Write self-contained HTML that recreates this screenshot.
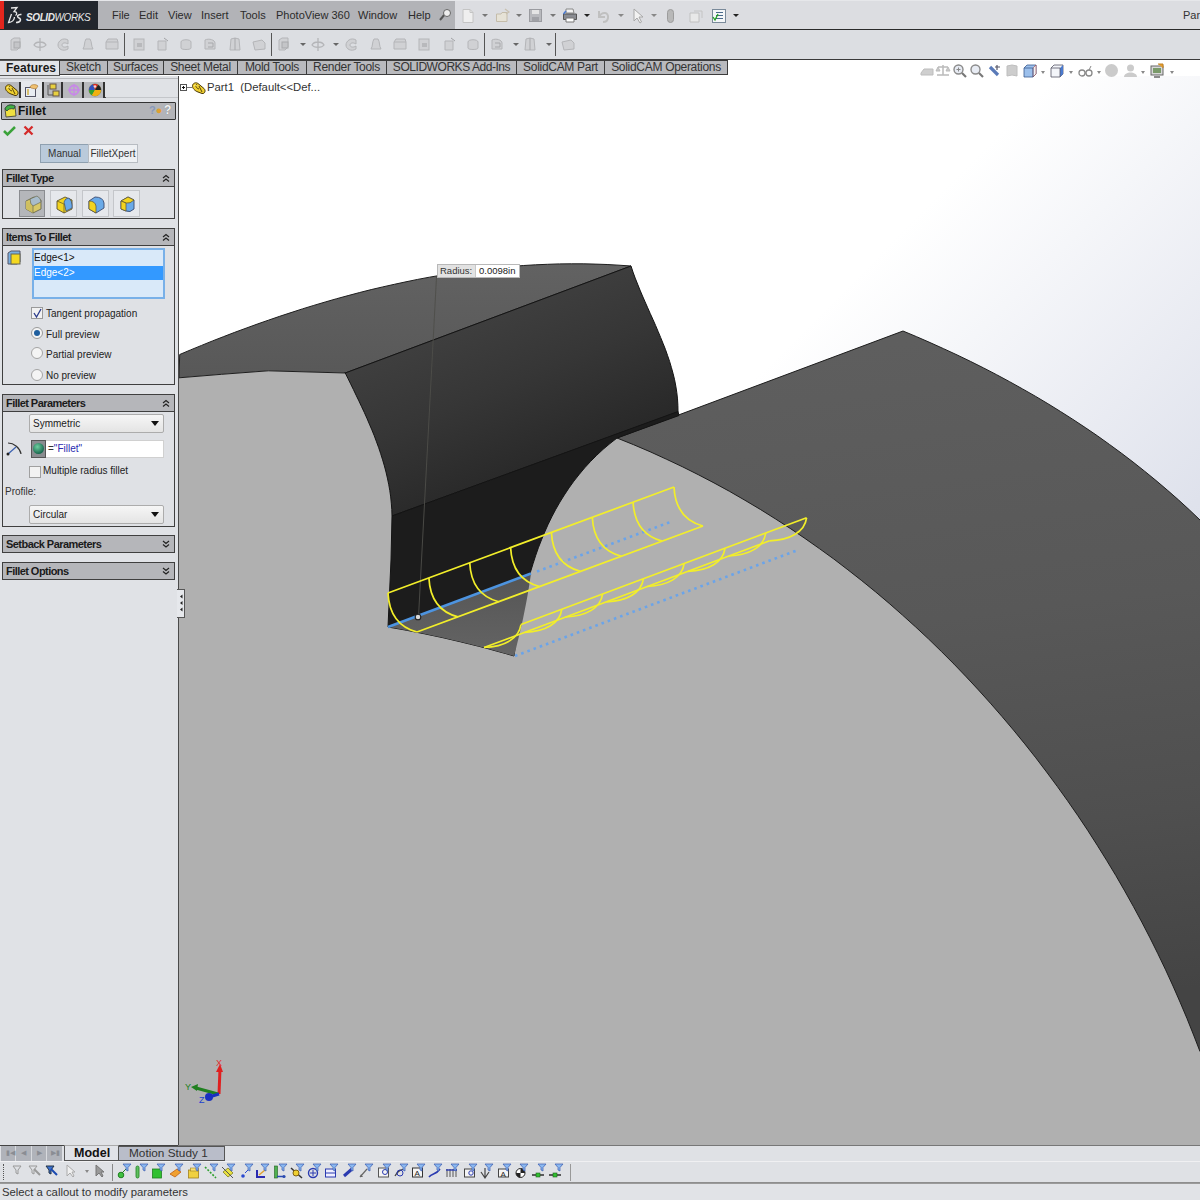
<!DOCTYPE html>
<html><head><meta charset="utf-8">
<style>
*{margin:0;padding:0;box-sizing:border-box}
html,body{width:1200px;height:1200px;overflow:hidden;background:#dfe1e5;font-family:"Liberation Sans",sans-serif;color:#222}
.a{position:absolute}
#title{left:0;top:0;width:1200px;height:30px;background:#dcdde1}
#menu{left:98px;top:1px;width:357px;height:28px;background:#b2b3b7}
#logo{left:0;top:0;width:98px;height:29px;background:#22262d}
#red{left:0;top:0;width:4px;height:29px;background:#e3261d}
#tline{left:0;top:29px;width:1200px;height:1px;background:#2a2a2a}
.mi{position:absolute;top:9px;font-size:11px;color:#2b2b2b;white-space:nowrap}
#tb2{left:0;top:30px;width:1200px;height:30px;background:#dcdee2}
#tline2{left:0;top:59px;width:1200px;height:1px;background:#3a3a3a}
#tabs{left:0;top:60px;width:1200px;height:16px;background:#fff}
.tab{position:absolute;top:0;height:15px;background:#b9babe;border:1px solid #3c3c3c;border-left:none;font-size:12px;line-height:13px;color:#333;white-space:nowrap;text-align:center;letter-spacing:-0.3px}
#left{left:0;top:76px;width:179px;height:1069px;background:#e0e2e6;border-right:1px solid #4a4a4a}
#vp{left:179px;top:76px;width:1021px;height:1070px;overflow:hidden;background:linear-gradient(135deg,#ffffff 0%,#ffffff 42%,#dfe2ec 69%,#c8ccdb 100%)}
#btabs{left:0;top:1145px;width:1200px;height:17px;background:#dfe1e5;border-top:1px solid #777}
#btool{left:0;top:1162px;width:1200px;height:21px;background:#dfe1e5}
#status{left:0;top:1183px;width:1200px;height:17px;background:#e1e3e7;border-top:1px solid #9a9a9a}
.hdr{position:absolute;left:2px;width:173px;height:18px;background:#b5b6ba;border:1px solid #3f3f3f;font-size:11px;font-weight:bold;line-height:16px;padding-left:3px;color:#1a1a1a;letter-spacing:-0.55px}
.body{position:absolute;left:2px;width:173px;background:#dfe1e5;border:1px solid #3f3f3f;border-top:none}
.txt{position:absolute;font-size:10px;color:#222;white-space:nowrap}
</style></head><body>
<div id="title" class="a"></div>
<div id="menu" class="a">
</div>
<div id="logo" class="a"></div>
<div id="red" class="a"></div>
<div id="tline" class="a"></div>
<div id="tb2" class="a"></div>
<div id="tline2" class="a"></div>
<div id="tabs" class="a"></div>
<div class="a" style="left:0;top:0;width:1200px;height:1px;background:#e6e7ea"></div>
<svg class="a" style="left:5px;top:5px" width="20" height="20" viewBox="0 0 20 20"><path d="M6 3 L12 2.5 L9 6.5 C12 6.5 12.5 9 10.5 10.5" fill="none" stroke="#e6e6e6" stroke-width="1.3"/><path d="M6.5 9 L3.5 17.5 C7 17.5 9.5 15 9.5 12" fill="none" stroke="#e6e6e6" stroke-width="1.3"/><path d="M16.5 9.5 C12.5 9 11.5 12 14 13 C16.5 14 16 17.5 11 17.5" fill="none" stroke="#e6e6e6" stroke-width="1.5"/></svg><div class="a" style="left:26px;top:12px;font-size:10px;line-height:11px;font-style:italic;color:#e8e8e8;letter-spacing:-0.4px;white-space:nowrap"><b>SOLID</b>WORKS</div>
<div class="mi" style="left:112px">File</div>
<div class="mi" style="left:139px">Edit</div>
<div class="mi" style="left:168px">View</div>
<div class="mi" style="left:201px">Insert</div>
<div class="mi" style="left:240px">Tools</div>
<div class="mi" style="left:276px">PhotoView 360</div>
<div class="mi" style="left:358px">Window</div>
<div class="mi" style="left:408px">Help</div>
<svg class="a" style="left:438px;top:8px" width="14" height="14" viewBox="0 0 14 14"><path d="M2 12 L7 6" stroke="#555" stroke-width="2"/><circle cx="9" cy="5" r="3.5" fill="#eee" stroke="#666"/></svg>
<div class="mi" style="left:1183px;color:#333">Par</div>
<svg class="a" style="left:461px;top:8px" width="14" height="16"><path d="M2 1.5 H9 L12 4.5 V14.5 H2Z" fill="#efefef" stroke="#c4c4c4"/><path d="M9 1.5 V4.5 H12" fill="none" stroke="#c4c4c4"/></svg><div class="a" style="left:482px;top:14px;width:0;height:0;border-left:3px solid transparent;border-right:3px solid transparent;border-top:3px solid #777"></div><svg class="a" style="left:495px;top:8px" width="16" height="16"><path d="M1.5 6 H6 L7 4.5 H12 V13.5 H1.5Z" fill="#e6e2d6" stroke="#c4bcaa"/><path d="M10 1 L14 4 L11 6" fill="none" stroke="#c8c0b0" stroke-width="1.2"/></svg><div class="a" style="left:516px;top:14px;width:0;height:0;border-left:3px solid transparent;border-right:3px solid transparent;border-top:3px solid #777"></div><svg class="a" style="left:528px;top:8px" width="15" height="15"><rect x="1.5" y="1.5" width="12" height="12" fill="#b8b9bd" stroke="#9a9ba0"/><rect x="4" y="2" width="7" height="4" fill="#e4e4e4"/><rect x="4" y="9" width="7" height="4" fill="#a0a1a6"/></svg><div class="a" style="left:550px;top:14px;width:0;height:0;border-left:3px solid transparent;border-right:3px solid transparent;border-top:3px solid #777"></div><svg class="a" style="left:562px;top:7px" width="16" height="17"><path d="M4 2 H11 L12 6 H4Z" fill="#f4f4f4" stroke="#888"/><path d="M1.5 7 H14.5 V12.5 H1.5Z" fill="#8a8c92" stroke="#555"/><path d="M4 11 H12 V15 H4Z" fill="#fff" stroke="#777"/><path d="M1.5 7 L4 4" stroke="#4a7ad0" stroke-width="1.5"/></svg><div class="a" style="left:584px;top:14px;width:0;height:0;border-left:3px solid transparent;border-right:3px solid transparent;border-top:3px solid #222"></div><svg class="a" style="left:596px;top:8px" width="16" height="16"><path d="M3 3 V9 H9" fill="none" stroke="#c0c0c0" stroke-width="2"/><path d="M3 9 C6 3 13 4 12 10 C11.5 13 9 14 7 14" fill="none" stroke="#c0c0c0" stroke-width="2"/></svg><div class="a" style="left:618px;top:14px;width:0;height:0;border-left:3px solid transparent;border-right:3px solid transparent;border-top:3px solid #888"></div><svg class="a" style="left:632px;top:8px" width="12" height="16"><path d="M2 1 L2 13 L5 10 L8 15 L9.5 14 L7 9 L11 9 Z" fill="#f2f2f2" stroke="#a8a8a8"/></svg><div class="a" style="left:651px;top:14px;width:0;height:0;border-left:3px solid transparent;border-right:3px solid transparent;border-top:3px solid #888"></div><div class="a" style="left:667px;top:9px;width:7px;height:14px;background:#b8b8b8;border-radius:3.5px;border:1px solid #9c9c9c"></div><svg class="a" style="left:688px;top:8px" width="16" height="16"><path d="M2 5 H11 V14 H2Z" fill="#e8e8e8" stroke="#c0c0c0"/><path d="M6 3 H14 V10" fill="none" stroke="#c4c4c4"/></svg><svg class="a" style="left:711px;top:8px" width="16" height="16"><rect x="1.5" y="1.5" width="13" height="13" fill="#f4f6f8" stroke="#7a8a9a"/><path d="M5 4.5 H12 M5 7.5 H12 M5 10.5 H12" stroke="#4a6a8a"/><path d="M2 9 L4 12 L7 6" fill="none" stroke="#20a020" stroke-width="1.3"/></svg><div class="a" style="left:733px;top:14px;width:0;height:0;border-left:3px solid transparent;border-right:3px solid transparent;border-top:3px solid #222"></div><svg class="a" style="left:9px;top:37px" width="15" height="15"><path d="M2 3 L5 1 L11 1 L11 10 L8 13 L2 13Z" fill="#d0d1d4" stroke="#b4b5b8"/><rect x="5" y="5" width="6" height="6" fill="#c4c5c8" stroke="#a8a9ac"/></svg><svg class="a" style="left:33px;top:37px" width="15" height="15"><path d="M7 1 V14 M1 8 C3 4 11 4 13 8 C11 11 3 11 1 8Z" fill="none" stroke="#b4b5b8" stroke-width="1.3"/></svg><svg class="a" style="left:57px;top:37px" width="15" height="15"><path d="M11 3 C6 0 1 4 1 8 C1 12 6 15 11 12 L11 9 C8 11 5 10 5 8 C5 6 8 5 11 7Z" fill="#d0d1d4" stroke="#b4b5b8"/></svg><svg class="a" style="left:81px;top:37px" width="15" height="15"><path d="M5 2 C3 5 4 9 2 12 H12 C10 9 11 5 9 2Z" fill="#d0d1d4" stroke="#b4b5b8"/></svg><svg class="a" style="left:105px;top:37px" width="15" height="15"><path d="M1 5 L3 2 L12 2 L13 5 V12 H1Z" fill="#d0d1d4" stroke="#b4b5b8"/><path d="M1 5 H13" stroke="#b4b5b8"/></svg><svg class="a" style="left:132px;top:37px" width="15" height="15"><rect x="2" y="2" width="10" height="11" fill="#d0d1d4" stroke="#b4b5b8"/><rect x="5" y="6" width="5" height="4" fill="#b8b9bc"/></svg><svg class="a" style="left:155px;top:37px" width="15" height="15"><path d="M3 4 H11 V13 H3Z" fill="#d0d1d4" stroke="#b4b5b8"/><path d="M9 1 L13 4" stroke="#a0a1a4"/></svg><svg class="a" style="left:179px;top:37px" width="15" height="15"><path d="M2 5 C2 2 12 2 12 5 V11 C12 13 2 13 2 11Z" fill="#d0d1d4" stroke="#b4b5b8"/></svg><svg class="a" style="left:203px;top:37px" width="15" height="15"><path d="M2 3 C6 1 12 3 12 6 V12 H2Z" fill="#d0d1d4" stroke="#b4b5b8"/><path d="M5 6 H10 V10 H5" fill="none" stroke="#a8a9ac"/></svg><svg class="a" style="left:228px;top:37px" width="15" height="15"><path d="M3 2 L7 1 L11 2 L12 13 L2 13Z" fill="#d0d1d4" stroke="#b4b5b8"/><path d="M7 1 V13" stroke="#a8a9ac"/></svg><svg class="a" style="left:252px;top:37px" width="15" height="15"><path d="M1 5 L10 3 L13 6 V12 L3 13 Z" fill="#d0d1d4" stroke="#b4b5b8"/></svg><svg class="a" style="left:277px;top:37px" width="15" height="15"><path d="M2 3 L5 1 L11 1 L11 10 L8 13 L2 13Z" fill="#d0d1d4" stroke="#b4b5b8"/><rect x="5" y="5" width="6" height="6" fill="#c4c5c8" stroke="#a8a9ac"/></svg><svg class="a" style="left:311px;top:37px" width="15" height="15"><path d="M7 1 V14 M1 8 C3 4 11 4 13 8 C11 11 3 11 1 8Z" fill="none" stroke="#b4b5b8" stroke-width="1.3"/></svg><svg class="a" style="left:345px;top:37px" width="15" height="15"><path d="M11 3 C6 0 1 4 1 8 C1 12 6 15 11 12 L11 9 C8 11 5 10 5 8 C5 6 8 5 11 7Z" fill="#d0d1d4" stroke="#b4b5b8"/></svg><svg class="a" style="left:369px;top:37px" width="15" height="15"><path d="M5 2 C3 5 4 9 2 12 H12 C10 9 11 5 9 2Z" fill="#d0d1d4" stroke="#b4b5b8"/></svg><svg class="a" style="left:393px;top:37px" width="15" height="15"><path d="M1 5 L3 2 L12 2 L13 5 V12 H1Z" fill="#d0d1d4" stroke="#b4b5b8"/><path d="M1 5 H13" stroke="#b4b5b8"/></svg><svg class="a" style="left:417px;top:37px" width="15" height="15"><rect x="2" y="2" width="10" height="11" fill="#d0d1d4" stroke="#b4b5b8"/><rect x="5" y="6" width="5" height="4" fill="#b8b9bc"/></svg><svg class="a" style="left:442px;top:37px" width="15" height="15"><path d="M3 4 H11 V13 H3Z" fill="#d0d1d4" stroke="#b4b5b8"/><path d="M9 1 L13 4" stroke="#a0a1a4"/></svg><svg class="a" style="left:466px;top:37px" width="15" height="15"><path d="M2 5 C2 2 12 2 12 5 V11 C12 13 2 13 2 11Z" fill="#d0d1d4" stroke="#b4b5b8"/></svg><svg class="a" style="left:490px;top:37px" width="15" height="15"><path d="M2 3 C6 1 12 3 12 6 V12 H2Z" fill="#d0d1d4" stroke="#b4b5b8"/><path d="M5 6 H10 V10 H5" fill="none" stroke="#a8a9ac"/></svg><svg class="a" style="left:523px;top:37px" width="15" height="15"><path d="M3 2 L7 1 L11 2 L12 13 L2 13Z" fill="#d0d1d4" stroke="#b4b5b8"/><path d="M7 1 V13" stroke="#a8a9ac"/></svg><svg class="a" style="left:561px;top:37px" width="15" height="15"><path d="M1 5 L10 3 L13 6 V12 L3 13 Z" fill="#d0d1d4" stroke="#b4b5b8"/></svg><div class="a" style="left:124px;top:33px;width:1px;height:23px;background:#555"></div><div class="a" style="left:271px;top:33px;width:1px;height:23px;background:#555"></div><div class="a" style="left:484px;top:33px;width:1px;height:23px;background:#555"></div><div class="a" style="left:555px;top:33px;width:1px;height:23px;background:#555"></div><div class="a" style="left:300px;top:43px;width:0;height:0;border-left:3px solid transparent;border-right:3px solid transparent;border-top:3px solid #666"></div><div class="a" style="left:333px;top:43px;width:0;height:0;border-left:3px solid transparent;border-right:3px solid transparent;border-top:3px solid #666"></div><div class="a" style="left:513px;top:43px;width:0;height:0;border-left:3px solid transparent;border-right:3px solid transparent;border-top:3px solid #666"></div><div class="a" style="left:546px;top:43px;width:0;height:0;border-left:3px solid transparent;border-right:3px solid transparent;border-top:3px solid #666"></div><div class="a" style="left:0;top:60px;width:59px;height:16px;background:#e2e4e8;border-top:1px solid #555;"></div><div class="a" style="left:6px;top:61px;font-size:12px;font-weight:bold;color:#1a1a1a;line-height:14px">Features</div><div class="tab" style="left:59px;top:60px;width:49px;border-left:1px solid #3c3c3c"><span>Sketch</span></div><div class="tab" style="left:107px;top:60px;width:57px;border-left:1px solid #3c3c3c"><span>Surfaces</span></div><div class="tab" style="left:163px;top:60px;width:75px;border-left:1px solid #3c3c3c"><span>Sheet Metal</span></div><div class="tab" style="left:237px;top:60px;width:70px;border-left:1px solid #3c3c3c"><span>Mold Tools</span></div><div class="tab" style="left:306px;top:60px;width:81px;border-left:1px solid #3c3c3c"><span>Render Tools</span></div><div class="tab" style="left:386px;top:60px;width:131px;border-left:1px solid #3c3c3c"><span style="letter-spacing:-0.45px">SOLIDWORKS Add-Ins</span></div><div class="tab" style="left:516px;top:60px;width:89px;border-left:1px solid #3c3c3c"><span>SolidCAM Part</span></div><div class="tab" style="left:604px;top:60px;width:124px;border-left:1px solid #3c3c3c"><span>SolidCAM Operations</span></div>
<div id="left" class="a"></div>
<div class="a" style="left:0;top:75px;width:60px;height:1px;background:#555"></div><div class="a" style="left:0;top:78px;width:178px;height:1px;background:#b8babe"></div>
<!-- panel tabs -->
<div class="a" style="left:0;top:81px;width:106px;height:17px;border-bottom:1px solid #444"></div><div class="a" style="left:106px;top:97px;width:72px;height:1px;background:#c4c6ca"></div><div class="a" style="left:0;top:82px;width:1px;height:16px;background:#444"></div>
<div class="a" style="left:0;top:82px;width:21px;height:16px;background:#b8b9bd;border-right:2px solid #333"></div>
<div class="a" style="left:21px;top:81px;width:21px;height:17px;background:#e6e8ec"></div>
<div class="a" style="left:42px;top:82px;width:21px;height:16px;background:#b8b9bd;border-left:2px solid #333;border-right:2px solid #333"></div>
<div class="a" style="left:63px;top:82px;width:21px;height:16px;background:#b8b9bd;border-right:2px solid #333"></div>
<div class="a" style="left:84px;top:82px;width:21px;height:16px;background:#b8b9bd;border-right:2px solid #333"></div>
<svg class="a" style="left:3px;top:83px" width="17" height="14"><path d="M2.5 4.5 C3 2 6 1 8 2.5 L14 7.5 C16 9.5 15 13 12 12.5 L8 11 C5 10 2 7 2.5 4.5Z" fill="#f0d030" stroke="#4a3808" stroke-width="1"/><path d="M7 3 C5 5 6 7 9 8 M9 5 L12 11" fill="none" stroke="#4a3808" stroke-width="0.9"/><path d="M4 5 C5 4 6 4 7 5" stroke="#fff6a0" stroke-width="0.8" fill="none"/></svg>
<svg class="a" style="left:24px;top:83px" width="16" height="14"><rect x="1.5" y="4.5" width="10" height="9" fill="#e8ecf2" stroke="#556"/><rect x="3" y="6" width="2" height="6" fill="#d8c070"/><path d="M6 4 C7 1 12 1 14 3 L12 6 L7 5Z" fill="#f0c070" stroke="#a07030" stroke-width="0.6"/></svg>
<svg class="a" style="left:45px;top:83px" width="16" height="14"><rect x="5" y="1" width="6" height="5" fill="#e8d040" stroke="#654"/><rect x="8" y="8" width="6" height="5" fill="#e8d040" stroke="#654"/><path d="M3 2 V12 H8" fill="none" stroke="#555"/></svg>
<svg class="a" style="left:66px;top:83px" width="16" height="14"><circle cx="8" cy="7" r="4.5" fill="none" stroke="#c888e8" stroke-width="1.8"/><path d="M8 1 V13 M2 7 H14" stroke="#c888e8" stroke-width="1.4"/></svg>
<svg class="a" style="left:87px;top:83px" width="16" height="14"><circle cx="8" cy="7" r="6" fill="#f0c020" stroke="#553" stroke-width="0.6"/><path d="M8 7 L6 1.3 A6 6 0 0 1 11 1.8Z" fill="#e02020"/><path d="M8 7 L11 1.8 A6 6 0 0 1 14 7Z" fill="#222"/><path d="M8 7 L2 7 A6 6 0 0 1 6 1.3Z" fill="#3050c0"/><path d="M8 7 L5 12.2 A6 6 0 0 1 2 7Z" fill="#30a030"/><path d="M8 7 L14 7 A6 6 0 0 1 5 12.2Z" fill="#f0b010"/><circle cx="8" cy="3.5" r="1.3" fill="#fff" opacity="0.8"/></svg>
<!-- Fillet header -->
<div class="a" style="left:1px;top:102px;width:175px;height:18px;background:#b3b4b8;border:1px solid #333;border-radius:1px"></div>
<svg class="a" style="left:3px;top:103px" width="15" height="16"><path d="M2 6 C3 2 8 1 12 3 L13 13 L3 14 Z" fill="#f0e040" stroke="#554"/><path d="M2 6 C3 2 8 1 12 3 L11 6 C8 5 5 6 4 8Z" fill="#40b040" stroke="#354"/></svg>
<div class="a" style="left:18px;top:104px;font-size:12px;font-weight:bold;color:#111;line-height:14px">Fillet</div>
<div class="a" style="left:149px;top:104px;font-size:11px;color:#8899bb;font-weight:bold">?<span style="color:#e0a030">&#9679;</span></div>
<div class="a" style="left:164px;top:103px;font-size:12px;color:#f2f2f2;font-weight:bold;text-shadow:0 0 1px #777">?</div>
<!-- check / x -->
<svg class="a" style="left:2px;top:124px" width="15" height="13"><path d="M2 7 L5.5 10.5 L13 3" fill="none" stroke="#3aa23a" stroke-width="2.5"/></svg>
<svg class="a" style="left:22px;top:124px" width="13" height="13"><path d="M2.5 2.5 L10.5 10.5 M10.5 2.5 L2.5 10.5" fill="none" stroke="#d42a2a" stroke-width="2.3"/></svg>
<!-- Manual / FilletXpert -->
<div class="a" style="left:40px;top:144px;width:49px;height:19px;background:#bacadb;border:1px solid #8fa0b0;font-size:10px;color:#333;line-height:17px;text-align:center">Manual</div>
<div class="a" style="left:88px;top:144px;width:50px;height:19px;background:#eef0f3;border:1px solid #b8bcc2;font-size:10px;color:#333;line-height:17px;text-align:center">FilletXpert</div>
<!-- Fillet Type -->
<div class="hdr" style="top:169px">Fillet Type<svg style="position:absolute;right:4px;top:3px" width="8" height="10"><path d="M1 5 L4 2.5 L7 5 M1 8.5 L4 6 L7 8.5" fill="none" stroke="#222" stroke-width="1.2"/></svg></div>
<div class="body" style="top:187px;height:32px"></div>
<div class="a" style="left:19px;top:190px;width:26px;height:27px;background:#b4b6ba;border:1px solid #8a8c90"></div><svg class="a" style="left:23px;top:193px" width="21" height="22"><path d="M3 8 L11 4 L18 7 L18 16 L10 20 L3 16 Z" fill="#d8c868" stroke="#6a6a50" stroke-width="0.9"/><path d="M3 8 L10 11 L10 20 L3 16Z" fill="#cfbf60"/><path d="M7 6 L14 3 Q18 5 18 9 L10 13 Q7 11 7 6Z" fill="#a8bccc" stroke="#6a6a50" stroke-width="0.7"/><path d="M10 13 L10 20" stroke="#6a6a50" stroke-width="0.7"/></svg><div class="a" style="left:50px;top:190px;width:27px;height:27px;background:#e6e8ec;border:1px solid #c4c6ca"></div><svg class="a" style="left:54px;top:193px" width="21" height="22"><path d="M3 8 L11 4 L18 7 L18 16 L10 20 L3 16 Z" fill="#f2d420" stroke="#5a5030" stroke-width="0.9"/><path d="M10 9 Q11 5 15 5 Q18 8 18 12 L18 15 L12 18 Q11 13 10 9Z" fill="#6aaae8" stroke="#3a4a70" stroke-width="0.7"/><path d="M3 8 L10 11 L10 20" fill="none" stroke="#5a5030" stroke-width="0.7"/></svg><div class="a" style="left:82px;top:190px;width:27px;height:27px;background:#e6e8ec;border:1px solid #c4c6ca"></div><svg class="a" style="left:86px;top:193px" width="21" height="22"><path d="M3 8 L9 4 Q17 4 18 10 L18 15 L10 20 L3 16 Z" fill="#6aaae8" stroke="#3a4a70" stroke-width="0.9"/><path d="M3 8 Q9 8 10 13 L10 20 L3 16Z" fill="#f2d420" stroke="#5a5030" stroke-width="0.7"/></svg><div class="a" style="left:113px;top:190px;width:27px;height:27px;background:#e6e8ec;border:1px solid #c4c6ca"></div><svg class="a" style="left:117px;top:193px" width="21" height="22"><path d="M4 8 L11 4 L17 7 L17 16 Q13 20 9 18 L4 16 Z" fill="#6aaae8" stroke="#3a4a70" stroke-width="0.9"/><path d="M4 8 L11 4 L17 7 Q13 11 9 10Z" fill="#f2d420" stroke="#5a5030" stroke-width="0.7"/><path d="M4 8 L9 10 L9 18 L4 16Z" fill="#f2d420" stroke="#5a5030" stroke-width="0.7"/></svg>
<!-- Items to fillet -->
<div class="hdr" style="top:228px"><u style="text-decoration:none">Items To Fillet</u><svg style="position:absolute;right:4px;top:3px" width="8" height="10"><path d="M1 5 L4 2.5 L7 5 M1 8.5 L4 6 L7 8.5" fill="none" stroke="#222" stroke-width="1.2"/></svg></div>
<div class="body" style="top:246px;height:139px"></div>
<svg class="a" style="left:7px;top:250px" width="16" height="15"><path d="M1 3 L4 1 L13 1 L13 12 L10 14 L1 14Z" fill="#7ab0e0" stroke="#556"/><rect x="4" y="4" width="9" height="10" fill="#f4d820" stroke="#665"/></svg>
<div class="a" style="left:32px;top:248px;width:133px;height:51px;background:#d9e9f9;border:2px solid #78b0e8"></div>
<div class="a" style="left:34px;top:266px;width:129px;height:14px;background:#3399ff"></div>
<div class="txt" style="left:34px;top:252px;font-size:10px;color:#111">Edge&lt;1&gt;</div>
<div class="txt" style="left:34px;top:267px;font-size:10px;color:#fff">Edge&lt;2&gt;</div>
<div class="a" style="left:31px;top:307px;width:12px;height:12px;background:#f2f2f2;border:1px solid #9a9a9a"></div>
<svg class="a" style="left:32px;top:308px" width="11" height="11"><path d="M2 5 L4.5 9 L9 1" fill="none" stroke="#2a3a8a" stroke-width="1.3"/></svg>
<div class="txt" style="left:46px;top:308px">Tangent propagation</div>
<div class="a" style="left:31px;top:327px;width:12px;height:12px;border-radius:50%;background:#f4f4f4;border:1px solid #9a9a9a"></div>
<div class="a" style="left:34px;top:330px;width:6px;height:6px;border-radius:50%;background:#1f5f9f"></div>
<div class="txt" style="left:46px;top:329px">Full preview</div>
<div class="a" style="left:31px;top:347px;width:12px;height:12px;border-radius:50%;background:#f4f4f4;border:1px solid #a4a4a4"></div>
<div class="txt" style="left:46px;top:348.5px">Partial preview</div>
<div class="a" style="left:31px;top:369px;width:12px;height:12px;border-radius:50%;background:#f4f4f4;border:1px solid #a4a4a4"></div>
<div class="txt" style="left:46px;top:370px">No preview</div>
<!-- Fillet Parameters -->
<div class="hdr" style="top:394px">Fillet Parameters<svg style="position:absolute;right:4px;top:3px" width="8" height="10"><path d="M1 5 L4 2.5 L7 5 M1 8.5 L4 6 L7 8.5" fill="none" stroke="#222" stroke-width="1.2"/></svg></div>
<div class="body" style="top:412px;height:115px"></div>
<div class="a" style="left:29px;top:414px;width:135px;height:19px;background:linear-gradient(#f6f6f6,#e4e4e4);border:1px solid #acacac;border-radius:2px"></div>
<div class="txt" style="left:33px;top:418px">Symmetric</div>
<div class="a" style="left:151px;top:421px;width:0;height:0;border-left:4px solid transparent;border-right:4px solid transparent;border-top:5px solid #111"></div>
<svg class="a" style="left:5px;top:440px" width="18" height="17"><path d="M3 3 C9 3 15 8 16 14" fill="none" stroke="#333" stroke-width="1.2"/><path d="M3 14 L11 7" stroke="#3a60b0" stroke-width="1.2"/><circle cx="3" cy="14" r="1.5" fill="#222"/></svg>
<div class="a" style="left:31px;top:440px;width:133px;height:18px;background:#fff;border:1px solid #d0d0d0"></div>
<div class="a" style="left:31px;top:440px;width:15px;height:18px;background:#8a8c90;border:1px solid #555"></div>
<div class="a" style="left:33px;top:443px;width:11px;height:11px;border-radius:50%;background:radial-gradient(circle at 40% 35%,#6fd0a0,#1a6a50 70%)"></div>
<div class="txt" style="left:48px;top:443px;color:#333">=<span style="color:#2a2ab0">"Fillet"</span></div>
<div class="a" style="left:29px;top:466px;width:12px;height:12px;background:#f2f2f2;border:1px solid #a0a0a0"></div>
<div class="txt" style="left:43px;top:465px">Multiple radius fillet</div>
<div class="txt" style="left:5px;top:486px;color:#333">Profile:</div>
<div class="a" style="left:29px;top:505px;width:135px;height:19px;background:linear-gradient(#f6f6f6,#e4e4e4);border:1px solid #acacac;border-radius:2px"></div>
<div class="txt" style="left:33px;top:509px">Circular</div>
<div class="a" style="left:151px;top:512px;width:0;height:0;border-left:4px solid transparent;border-right:4px solid transparent;border-top:5px solid #111"></div>
<!-- Setback / Options -->
<div class="hdr" style="top:535px">Setback Parameters<svg style="position:absolute;right:4px;top:3px" width="8" height="10"><path d="M1 2 L4 4.5 L7 2 M1 5.5 L4 8 L7 5.5" fill="none" stroke="#222" stroke-width="1.2"/></svg></div>
<div class="hdr" style="top:562px">Fillet Options<svg style="position:absolute;right:4px;top:3px" width="8" height="10"><path d="M1 2 L4 4.5 L7 2 M1 5.5 L4 8 L7 5.5" fill="none" stroke="#222" stroke-width="1.2"/></svg></div>


<div id="vp" class="a"></div>
<svg class="a" style="left:179px;top:76px" width="1021" height="1070" viewBox="179 76 1021 1070">
<defs>
<linearGradient id="gR" x1="0" y1="0" x2="0.1" y2="1"><stop offset="0" stop-color="#5f5f5f"/><stop offset="0.45" stop-color="#585858"/><stop offset="0.75" stop-color="#4f4f4f"/><stop offset="1" stop-color="#444444"/></linearGradient>
<linearGradient id="gT" x1="0" y1="0" x2="0" y2="1"><stop offset="0" stop-color="#626262"/><stop offset="1" stop-color="#585858"/></linearGradient>
<linearGradient id="gF" x1="0.1" y1="0.1" x2="0.6" y2="1"><stop offset="0" stop-color="#464646"/><stop offset="0.5" stop-color="#363636"/><stop offset="1" stop-color="#222222"/></linearGradient>
<linearGradient id="gB" x1="0" y1="0" x2="0" y2="1"><stop offset="0" stop-color="#555"/><stop offset="1" stop-color="#646464"/></linearGradient>
</defs>
<path d="M179 377.8 L221.7 374.3 L268.3 370.8 L345.3 373 L420 372 L420 509 L617 438 L903 331 L1200 520 L1200 1146 L179 1146 Z" fill="#b0b0b0"/>
<path d="M617 438 L903 331 L903.0 331.0 L916.6 336.7 L930.1 342.6 L943.6 348.7 L957.0 354.9 L970.3 361.3 L983.5 367.9 L996.6 374.7 L1009.6 381.7 L1022.5 388.9 L1035.3 396.2 L1047.9 403.7 L1060.5 411.5 L1072.9 419.4 L1085.2 427.5 L1097.4 435.8 L1109.4 444.4 L1121.3 453.1 L1133.0 462.0 L1144.6 471.2 L1156.0 480.5 L1167.3 490.1 L1178.4 499.8 L1189.3 509.8 L1200.0 520.0 L1200 1051.5 L1200.0 1051.5 L1193.6 1035.0 L1187.0 1018.5 L1180.1 1002.2 L1173.0 986.0 L1165.6 969.8 L1157.9 953.8 L1150.0 937.9 L1141.8 922.1 L1133.4 906.5 L1124.7 890.9 L1115.8 875.5 L1106.6 860.3 L1097.2 845.2 L1087.6 830.2 L1077.7 815.4 L1067.6 800.8 L1057.2 786.3 L1046.6 772.0 L1035.8 757.8 L1024.8 743.9 L1013.5 730.1 L1002.0 716.5 L990.3 703.1 L978.4 689.9 L966.3 676.9 L954.0 664.1 L941.4 651.5 L928.7 639.1 L915.7 627.0 L902.5 615.1 L889.2 603.4 L875.6 591.9 L861.8 580.7 L847.9 569.8 L833.8 559.0 L819.4 548.6 L804.9 538.4 L790.2 528.4 L775.3 518.8 L760.3 509.4 L745.0 500.3 L729.6 491.4 L714.0 482.9 L698.3 474.7 L682.3 466.7 L666.2 459.1 L650.0 451.7 L633.6 444.7 L617.0 438.0 Z" fill="url(#gR)"/>
<path d="M617 438 L903 331 L903.0 331.0 L916.6 336.7 L930.1 342.6 L943.6 348.7 L957.0 354.9 L970.3 361.3 L983.5 367.9 L996.6 374.7 L1009.6 381.7 L1022.5 388.9 L1035.3 396.2 L1047.9 403.7 L1060.5 411.5 L1072.9 419.4 L1085.2 427.5 L1097.4 435.8 L1109.4 444.4 L1121.3 453.1 L1133.0 462.0 L1144.6 471.2 L1156.0 480.5 L1167.3 490.1 L1178.4 499.8 L1189.3 509.8 L1200.0 520.0 M1200 1051.5 L1200.0 1051.5 L1193.6 1035.0 L1187.0 1018.5 L1180.1 1002.2 L1173.0 986.0 L1165.6 969.8 L1157.9 953.8 L1150.0 937.9 L1141.8 922.1 L1133.4 906.5 L1124.7 890.9 L1115.8 875.5 L1106.6 860.3 L1097.2 845.2 L1087.6 830.2 L1077.7 815.4 L1067.6 800.8 L1057.2 786.3 L1046.6 772.0 L1035.8 757.8 L1024.8 743.9 L1013.5 730.1 L1002.0 716.5 L990.3 703.1 L978.4 689.9 L966.3 676.9 L954.0 664.1 L941.4 651.5 L928.7 639.1 L915.7 627.0 L902.5 615.1 L889.2 603.4 L875.6 591.9 L861.8 580.7 L847.9 569.8 L833.8 559.0 L819.4 548.6 L804.9 538.4 L790.2 528.4 L775.3 518.8 L760.3 509.4 L745.0 500.3 L729.6 491.4 L714.0 482.9 L698.3 474.7 L682.3 466.7 L666.2 459.1 L650.0 451.7 L633.6 444.7 L617.0 438.0" fill="none" stroke="#1e1e1e" stroke-width="1"/>
<path d="M179.7 354.5 L190.6 349.9 L201.6 345.4 L212.6 340.9 L223.7 336.6 L234.8 332.3 L246.0 328.2 L257.2 324.1 L268.4 320.2 L279.7 316.3 L291.0 312.6 L302.4 308.9 L313.8 305.4 L325.2 302.0 L336.7 298.7 L348.1 295.6 L359.7 292.5 L371.2 289.6 L382.8 286.9 L394.4 284.3 L406.0 281.8 L417.7 279.4 L429.4 277.2 L441.1 275.2 L452.9 273.3 L464.6 271.6 L476.4 270.0 L488.2 268.7 L500.0 267.4 L511.9 266.4 L523.7 265.5 L535.6 264.8 L547.5 264.3 L559.4 263.9 L571.3 263.8 L583.2 263.8 L595.1 264.1 L607.1 264.5 L619.0 265.2 L631.0 266.0 L345.3 373 L268.3 370.8 L221.7 374.3 L179 377.8 Z" fill="url(#gT)" stroke="#1e1e1e" stroke-width="1"/>
<path d="M345.3 373 L631 266 L631.0 266.0 L633.0 272.1 L635.2 278.1 L637.6 284.1 L640.0 290.1 L642.5 296.0 L645.1 301.9 L647.7 307.8 L650.3 313.7 L653.0 319.6 L655.6 325.5 L658.1 331.4 L660.6 337.4 L663.0 343.3 L665.4 349.3 L667.5 355.3 L669.6 361.4 L671.4 367.5 L673.1 373.6 L674.6 379.8 L675.8 386.1 L676.8 392.5 L677.5 398.9 L677.9 405.4 L678.0 412.0 L392 516 L392.0 516.0 L391.8 509.6 L391.3 503.2 L390.7 496.9 L389.8 490.6 L388.7 484.3 L387.4 478.1 L386.0 472.0 L384.4 465.9 L382.6 459.8 L380.7 453.7 L378.7 447.7 L376.5 441.8 L374.3 435.8 L371.9 429.9 L369.4 424.1 L366.9 418.2 L364.3 412.4 L361.6 406.7 L358.9 400.9 L356.1 395.2 L353.4 389.5 L350.6 383.8 L347.8 378.1 L345.0 372.5 Z" fill="url(#gF)" stroke="#141414" stroke-width="1"/>
<path d="M392 516 L678 411.5 L679 415.5 L617 438 L617.0 438.0 L609.9 443.6 L603.1 449.3 L596.7 455.3 L590.5 461.5 L584.7 467.8 L579.2 474.4 L573.9 481.1 L569.0 487.9 L564.3 495.0 L559.9 502.1 L555.7 509.4 L551.8 516.8 L548.1 524.4 L544.7 532.1 L541.5 539.8 L538.4 547.7 L535.6 555.7 L533.0 563.8 L530.5 571.9 L528.2 580.1 L526.1 588.4 L524.2 596.7 L522.3 605.1 L520.7 613.5 L519.1 622.0 L517.7 630.5 L516.4 639.0 L515.1 647.5 L514.0 656.0 L514.0 656.0 L505.1 653.4 L496.2 651.0 L487.3 648.5 L478.4 646.2 L469.4 644.0 L460.4 641.8 L451.4 639.7 L442.4 637.6 L433.4 635.7 L424.4 633.8 L415.3 632.0 L406.2 630.2 L397.1 628.6 L388.0 627.0 L391 560 L392 516 Z" fill="#1c1c1c" stroke="#141414" stroke-width="1"/>
<path d="M388 627 L531 573.5 L531.0 573.5 L529.9 581.1 L528.7 588.6 L527.4 596.2 L526.0 603.7 L524.5 611.2 L523.0 618.7 L521.4 626.2 L519.6 633.7 L517.8 641.1 L516.0 648.6 L514.0 656.0 L514.0 656.0 L505.1 653.4 L496.2 651.0 L487.3 648.5 L478.4 646.2 L469.4 644.0 L460.4 641.8 L451.4 639.7 L442.4 637.6 L433.4 635.7 L424.4 633.8 L415.3 632.0 L406.2 630.2 L397.1 628.6 L388.0 627.0 Z" fill="url(#gB)"/>
<line x1="436.5" y1="277" x2="418.5" y2="617" stroke="#4e4e4a" stroke-width="0.9"/>
<line x1="388" y1="627" x2="531" y2="573.5" stroke="#4d94e0" stroke-width="2.6"/>
<line x1="537" y1="571.5" x2="673" y2="521" stroke="#6aa4ea" stroke-width="2.6" stroke-dasharray="2.6 4"/>
<line x1="515" y1="656" x2="798" y2="550" stroke="#6aa4ea" stroke-width="2.6" stroke-dasharray="2.6 4"/>
<g fill="none" stroke="#f2ee2a" stroke-width="1.7">
<path d="M388 593 L674 487 M417 632 L703 526"/>
<path d="M388.0 593.0C389.0 613.0 398.0 627.0 417.0 632.0 M428.9 577.9C429.9 597.9 438.9 611.9 457.9 616.9 M469.7 562.7C470.7 582.7 479.7 596.7 498.7 601.7 M510.6 547.6C511.6 567.6 520.6 581.6 539.6 586.6 M551.4 532.4C552.4 552.4 561.4 566.4 580.4 571.4 M592.3 517.3C593.3 537.3 602.3 551.3 621.3 556.3 M633.1 502.1C634.1 522.1 643.1 536.1 662.1 541.1 M674.0 487.0C675.0 507.0 684.0 521.0 703.0 526.0"/>
<path d="M521 624.5 L806.6 517.8 M484 647.5 L769.6 540.8"/>
<path d="M521.0 624.5C519.0 638.5 505.0 646.5 484.0 647.5 M561.8 609.3C559.8 623.3 545.8 631.3 524.8 632.3 M602.6 594.0C600.6 608.0 586.6 616.0 565.6 617.0 M643.4 578.8C641.4 592.8 627.4 600.8 606.4 601.8 M684.2 563.5C682.2 577.5 668.2 585.5 647.2 586.5 M725.0 548.3C723.0 562.3 709.0 570.3 688.0 571.3 M765.8 533.0C763.8 547.0 749.8 555.0 728.8 556.0 M806.6 517.8C804.6 531.8 790.6 539.8 769.6 540.8"/>
</g>
<circle cx="418" cy="617" r="2.8" fill="#d8d8d8" stroke="#222" stroke-width="1.1"/>
</svg>
<div class="a" style="left:437px;top:264px;width:83px;height:14px;border:1px solid #b8b8b8;background:#fff"></div>
<div class="a" style="left:438px;top:265px;width:38px;height:12px;background:#e2e2e2;border-right:1px solid #c8c8c8"></div>
<div class="a" style="left:440px;top:265px;font-size:9.5px;line-height:12px;color:#333">Radius:</div>
<div class="a" style="left:479px;top:265px;font-size:9.5px;line-height:12px;color:#222">0.0098in</div>

<div id="btabs" class="a"></div>
<div id="btool" class="a"></div>
<div id="status" class="a"></div>

<!-- tree -->
<div class="a" style="left:180px;top:84px;width:7px;height:7px;border:1px solid #555;background:#fff"></div>
<div class="a" style="left:182px;top:87px;width:3px;height:1px;background:#111"></div>
<div class="a" style="left:183px;top:86px;width:1px;height:3px;background:#111"></div>
<div class="a" style="left:187px;top:87px;width:5px;height:1px;background:#777"></div>
<svg class="a" style="left:190px;top:81px" width="17" height="14"><path d="M2.5 4.5 C3 2 6 1 8 2.5 L14 7.5 C16 9.5 15 13 12 12.5 L8 11 C5 10 2 7 2.5 4.5Z" fill="#f0d030" stroke="#4a3808" stroke-width="1"/><path d="M7 3 C5 5 6 7 9 8 M9 5 L12 11" fill="none" stroke="#4a3808" stroke-width="0.9"/><path d="M4 5 C5 4 6 4 7 5" stroke="#fff6a0" stroke-width="0.8" fill="none"/></svg>
<div class="a" style="left:207px;top:80px;font-size:11.3px;color:#333;white-space:nowrap;line-height:14px">Part1&nbsp;&nbsp;(Default&lt;&lt;Def...</div>
<!-- view toolbar -->
<svg class="a" style="left:919px;top:64px" width="16" height="14"><path d="M2 9 L5 5 L14 5 L14 11 L2 11Z" fill="#cfcfcf" stroke="#bdbdbd"/></svg><svg class="a" style="left:935px;top:63px" width="16" height="15"><path d="M8 2 V12 M3 4 H13 M2 12 H14" stroke="#bbb" stroke-width="1.5"/><path d="M1 8 L3 4 L5 8Z M11 8 L13 4 L15 8Z" fill="#ccc" stroke="#bbb"/></svg><svg class="a" style="left:952px;top:63px" width="16" height="16"><circle cx="6.5" cy="6.5" r="4.5" fill="#e8ecf4" stroke="#8a8a8a" stroke-width="1.4"/><path d="M10 10 L14 14" stroke="#777" stroke-width="2.2"/><path d="M4.5 6.5 H8.5 M6.5 4.5 V8.5" stroke="#888"/></svg><svg class="a" style="left:969px;top:63px" width="16" height="16"><circle cx="6.5" cy="6.5" r="4.5" fill="#e8ecf4" stroke="#8a8a8a" stroke-width="1.4"/><path d="M10 10 L14 14" stroke="#777" stroke-width="2.2"/></svg><svg class="a" style="left:987px;top:63px" width="16" height="16"><path d="M3 4 L11 12" stroke="#5a7ab8" stroke-width="3.2"/><path d="M10 2 V7 M8 4 H13" stroke="#556" stroke-width="1.2"/></svg><svg class="a" style="left:1005px;top:63px" width="14" height="15"><path d="M2 3 L7 2 L12 3 V13 L7 12 L2 13Z" fill="#cdcdcd" stroke="#bebebe"/></svg><svg class="a" style="left:1022px;top:63px" width="16" height="16"><path d="M2 5 L5 2 L14 2 V11 L11 14 H2Z" fill="#9cc0ec" stroke="#3a5a90" stroke-width="0.8"/><path d="M11 5 L14 2 V11 L11 14Z" fill="#f0f0f4" stroke="#a04040" stroke-width="0.6"/><path d="M2 5 H11 V14" fill="none" stroke="#3a5a90" stroke-width="0.8"/></svg><svg class="a" style="left:1049px;top:63px" width="16" height="16"><path d="M2 5 L5 2 L14 2 V11 L11 14 H2Z" fill="#f4f6fa" stroke="#556" stroke-width="0.8"/><path d="M11 5 L14 2 V11 L11 14Z" fill="#4a7ad0"/><path d="M2 5 H11 V14" fill="none" stroke="#556" stroke-width="0.8"/></svg><svg class="a" style="left:1077px;top:63px" width="17" height="16"><circle cx="5" cy="10" r="3" fill="none" stroke="#888" stroke-width="1.3"/><circle cx="12" cy="10" r="3" fill="none" stroke="#888" stroke-width="1.3"/><path d="M8 10 H9 M12 7 L14 3" stroke="#888"/></svg><div class="a" style="left:1105px;top:64px;width:13px;height:13px;border-radius:50%;background:#cbcbcb"></div><svg class="a" style="left:1123px;top:63px" width="15" height="15"><circle cx="7.5" cy="5" r="3.5" fill="#cbcbcb"/><path d="M1 14 C1 8 14 8 14 14Z" fill="#cbcbcb"/></svg><svg class="a" style="left:1149px;top:62px" width="17" height="17"><rect x="2" y="4" width="12" height="9" fill="#d8d8d8" stroke="#666"/><rect x="4" y="6" width="8" height="5" fill="#7a9a6a"/><path d="M9 2 L14 2 L14 6" fill="#e8a030" stroke="#c08020"/><path d="M5 15 H11" stroke="#666" stroke-width="1.5"/></svg><div class="a" style="left:1041px;top:71px;width:0;height:0;border-left:2px solid transparent;border-right:2px solid transparent;border-top:3px solid #888"></div><div class="a" style="left:1069px;top:71px;width:0;height:0;border-left:2px solid transparent;border-right:2px solid transparent;border-top:3px solid #888"></div><div class="a" style="left:1097px;top:71px;width:0;height:0;border-left:2px solid transparent;border-right:2px solid transparent;border-top:3px solid #888"></div><div class="a" style="left:1141px;top:71px;width:0;height:0;border-left:2px solid transparent;border-right:2px solid transparent;border-top:3px solid #888"></div><div class="a" style="left:1170px;top:71px;width:0;height:0;border-left:2px solid transparent;border-right:2px solid transparent;border-top:3px solid #888"></div>
<!-- triad -->
<svg class="a" style="left:182px;top:1054px" width="48" height="52">
<path d="M37 40 L38 15" stroke="#e02020" stroke-width="3"/><path d="M34 18 L38 10 L41 18Z" fill="#e02020"/>
<text x="34" y="12" font-size="9" fill="#e03030" font-family="Liberation Sans">X</text>
<path d="M36 40 L14 34" stroke="#208020" stroke-width="3"/><path d="M16 30 L9 33 L15 37Z" fill="#208020"/>
<text x="3" y="36" font-size="9" fill="#208020" font-family="Liberation Sans">Y</text>
<circle cx="27" cy="43" r="4" fill="#1a30c0"/><path d="M27 43 L37 40" stroke="#1a30c0" stroke-width="3"/>
<text x="17" y="49" font-size="9" fill="#2040d0" font-family="Liberation Sans">Z</text>
</svg>
<!-- bottom tabs -->
<div class="a" style="left:0;top:1145px;width:178px;height:1px;background:#444"></div>
<div class="a" style="left:1px;top:1146px;width:61px;height:15px;background:#b0b3ba"></div>
<div class="a" style="left:15px;top:1146px;width:1px;height:15px;background:#d8dade"></div><div class="a" style="left:31px;top:1146px;width:1px;height:15px;background:#d8dade"></div><div class="a" style="left:46px;top:1146px;width:1px;height:15px;background:#d8dade"></div><div class="a" style="left:6px;top:1148px;font-size:7px;color:#8a8d94;line-height:10px;white-space:nowrap">&#9646;&#9664;</div><div class="a" style="left:21px;top:1148px;font-size:7px;color:#8a8d94;line-height:10px;white-space:nowrap">&#9664;</div><div class="a" style="left:37px;top:1148px;font-size:7px;color:#8a8d94;line-height:10px;white-space:nowrap">&#9654;</div><div class="a" style="left:51px;top:1148px;font-size:7px;color:#8a8d94;line-height:10px;white-space:nowrap">&#9654;&#9646;</div>
<div class="a" style="left:64px;top:1145px;width:55px;height:16px;background:#e1e3e8;border:1px solid #555;border-top:1px solid #aaa"></div>
<div class="a" style="left:74px;top:1146px;font-size:12.5px;font-weight:bold;color:#111;line-height:14px">Model</div>
<div class="a" style="left:118px;top:1146px;width:107px;height:15px;background:#b9bdc9;border:1px solid #555"></div>
<div class="a" style="left:129px;top:1146px;font-size:11.8px;color:#333;line-height:14px;white-space:nowrap">Motion Study 1</div>
<div class="a" style="left:0;top:1161px;width:1200px;height:1px;background:#f0f0f2"></div>
<div class="a" style="left:3px;top:1164px;width:1px;height:16px;border-left:1px dotted #555"></div>
<svg class="a" style="left:12px;top:1165px" width="10" height="10"><path d="M1 1 H9 L6 5 V9 L4 8 V5Z" fill="none" stroke="#999"/></svg><svg class="a" style="left:28px;top:1165px" width="14" height="12"><path d="M1 1 H9 L6 5 V9 L4 8 V5Z" fill="none" stroke="#999"/><path d="M6 4 L12 10" stroke="#999" stroke-width="2"/></svg><svg class="a" style="left:45px;top:1165px" width="14" height="12"><path d="M1 1 H9 L6 5 V9 L4 8 V5Z" fill="#3a70d0" stroke="#234"/><path d="M6 4 L12 10" stroke="#1a4ab0" stroke-width="2"/></svg><svg class="a" style="left:66px;top:1164px" width="10" height="14"><path d="M1 1 V12 L4 9 L7 13 L8 12 L6 8 L9 8Z" fill="#f0f0f0" stroke="#aaa"/></svg><div class="a" style="left:85px;top:1170px;width:0;height:0;border-left:2px solid transparent;border-right:2px solid transparent;border-top:3px solid #888"></div><svg class="a" style="left:95px;top:1164px" width="12" height="14"><path d="M1 1 V12 L4 9 L7 13 L8 12 L6 8 L9 8Z" fill="#999" stroke="#777"/></svg><div class="a" style="left:112px;top:1164px;width:1px;height:17px;background:#888"></div><svg class="a" style="left:117px;top:1163px" width="15" height="17"><circle cx="4" cy="12" r="2.8" fill="#40c040" stroke="#208020"/><path d="M5 10 L9 6" stroke="#208020"/><path d="M6 1 H14 L11 4.5 V8 L9 7 V4.5Z" fill="#8ab8f0" stroke="#3a5ab0" stroke-width="0.7"/></svg><svg class="a" style="left:134px;top:1163px" width="15" height="17"><rect x="2" y="3" width="3" height="12" rx="1.5" fill="#60c060" stroke="#208020" stroke-width="0.8"/><path d="M6 1 H14 L11 4.5 V8 L9 7 V4.5Z" fill="#8ab8f0" stroke="#3a5ab0" stroke-width="0.7"/></svg><svg class="a" style="left:151px;top:1163px" width="15" height="17"><rect x="1.5" y="6" width="9" height="9" fill="#30c030" stroke="#208020" stroke-width="0.8"/><path d="M6 1 H14 L11 4.5 V8 L9 7 V4.5Z" fill="#8ab8f0" stroke="#3a5ab0" stroke-width="0.7"/></svg><svg class="a" style="left:169px;top:1163px" width="15" height="17"><path d="M1 11 L8 6 L12 9 L6 14Z" fill="#f0a030" stroke="#c06010" stroke-width="0.8"/><path d="M6 1 H14 L11 4.5 V8 L9 7 V4.5Z" fill="#8ab8f0" stroke="#3a5ab0" stroke-width="0.7"/></svg><svg class="a" style="left:187px;top:1163px" width="15" height="17"><rect x="1.5" y="7" width="10" height="8" fill="#f0d040" stroke="#a08020" stroke-width="0.8"/><rect x="3.5" y="5" width="8" height="3" fill="#f8e070" stroke="#a08020" stroke-width="0.6"/><path d="M6 1 H14 L11 4.5 V8 L9 7 V4.5Z" fill="#8ab8f0" stroke="#3a5ab0" stroke-width="0.7"/></svg><svg class="a" style="left:204px;top:1163px" width="15" height="17"><path d="M1 4 L12 15" stroke="#30a030" stroke-width="1.6" stroke-dasharray="2 1.5"/><path d="M6 1 H14 L11 4.5 V8 L9 7 V4.5Z" fill="#8ab8f0" stroke="#3a5ab0" stroke-width="0.7"/></svg><svg class="a" style="left:221px;top:1163px" width="15" height="17"><path d="M2 9 L7 5 L12 10 L7 14Z" fill="#e8e040" stroke="#808020" stroke-width="0.8"/><path d="M1 4 L12 15" stroke="#555"/><path d="M6 1 H14 L11 4.5 V8 L9 7 V4.5Z" fill="#8ab8f0" stroke="#3a5ab0" stroke-width="0.7"/></svg><svg class="a" style="left:239px;top:1163px" width="15" height="17"><circle cx="4" cy="13" r="1.8" fill="#2a4ad0"/><path d="M6 10 L9 7" stroke="#2a4ad0"/><path d="M6 1 H14 L11 4.5 V8 L9 7 V4.5Z" fill="#8ab8f0" stroke="#3a5ab0" stroke-width="0.7"/></svg><svg class="a" style="left:255px;top:1163px" width="15" height="17"><path d="M2 7 V14 H10" fill="none" stroke="#2a2ab0" stroke-width="2"/><path d="M4 12 L10 7" stroke="#e0a030" stroke-width="1.5"/><path d="M6 1 H14 L11 4.5 V8 L9 7 V4.5Z" fill="#8ab8f0" stroke="#3a5ab0" stroke-width="0.7"/></svg><svg class="a" style="left:273px;top:1163px" width="15" height="17"><rect x="1.5" y="3" width="3" height="12" fill="#50b050" stroke="#206020" stroke-width="0.6"/><path d="M4 13.5 H11" stroke="#2a4ab0" stroke-width="1.5"/><circle cx="11" cy="13.5" r="1.6" fill="#2a4ab0"/><path d="M6 1 H14 L11 4.5 V8 L9 7 V4.5Z" fill="#8ab8f0" stroke="#3a5ab0" stroke-width="0.7"/></svg><svg class="a" style="left:290px;top:1163px" width="15" height="17"><path d="M1 5 L12 15" stroke="#333" stroke-width="1.5"/><circle cx="6" cy="10" r="3" fill="#f0d030" stroke="#806010"/><path d="M6 1 H14 L11 4.5 V8 L9 7 V4.5Z" fill="#8ab8f0" stroke="#3a5ab0" stroke-width="0.7"/></svg><svg class="a" style="left:307px;top:1163px" width="15" height="17"><circle cx="6" cy="10" r="4.5" fill="none" stroke="#2a3ab0" stroke-width="1.4"/><path d="M3 10 H9 M6 7 V13" stroke="#2a3ab0"/><path d="M6 1 H14 L11 4.5 V8 L9 7 V4.5Z" fill="#8ab8f0" stroke="#3a5ab0" stroke-width="0.7"/></svg><svg class="a" style="left:324px;top:1163px" width="15" height="17"><rect x="1.5" y="6" width="10" height="8" fill="#eef" stroke="#2a3ab0"/><path d="M1.5 10 H11.5" stroke="#2a3ab0"/><path d="M6 1 H14 L11 4.5 V8 L9 7 V4.5Z" fill="#8ab8f0" stroke="#3a5ab0" stroke-width="0.7"/></svg><svg class="a" style="left:342px;top:1163px" width="15" height="17"><path d="M2 13 L10 6" stroke="#2a3ab0" stroke-width="3"/><path d="M6 1 H14 L11 4.5 V8 L9 7 V4.5Z" fill="#8ab8f0" stroke="#3a5ab0" stroke-width="0.7"/></svg><svg class="a" style="left:359px;top:1163px" width="15" height="17"><path d="M1 14 L8 6" stroke="#666" stroke-width="1.2"/><path d="M1 14 L4 14 L2 11Z" fill="#666"/><path d="M6 1 H14 L11 4.5 V8 L9 7 V4.5Z" fill="#8ab8f0" stroke="#3a5ab0" stroke-width="0.7"/></svg><svg class="a" style="left:377px;top:1163px" width="15" height="17"><rect x="1.5" y="5" width="10" height="9" fill="#f4f4f4" stroke="#555"/><circle cx="8" cy="9" r="2.5" fill="none" stroke="#2a3ab0"/><path d="M6 1 H14 L11 4.5 V8 L9 7 V4.5Z" fill="#8ab8f0" stroke="#3a5ab0" stroke-width="0.7"/></svg><svg class="a" style="left:394px;top:1163px" width="15" height="17"><path d="M1 13 C3 8 8 6 11 6" fill="none" stroke="#444" stroke-width="1.2"/><circle cx="6" cy="10" r="3" fill="none" stroke="#2a3ab0"/><path d="M6 1 H14 L11 4.5 V8 L9 7 V4.5Z" fill="#8ab8f0" stroke="#3a5ab0" stroke-width="0.7"/></svg><svg class="a" style="left:411px;top:1163px" width="15" height="17"><rect x="1.5" y="5" width="10" height="9" fill="#f4f4f4" stroke="#333"/><text x="3.5" y="13" font-size="8" fill="#222" font-family="Liberation Sans">A</text><path d="M6 1 H14 L11 4.5 V8 L9 7 V4.5Z" fill="#8ab8f0" stroke="#3a5ab0" stroke-width="0.7"/></svg><svg class="a" style="left:428px;top:1163px" width="15" height="17"><path d="M1 14 C4 10 8 12 12 6" fill="none" stroke="#2a3ab0" stroke-width="1.5"/><path d="M6 1 H14 L11 4.5 V8 L9 7 V4.5Z" fill="#8ab8f0" stroke="#3a5ab0" stroke-width="0.7"/></svg><svg class="a" style="left:445px;top:1163px" width="15" height="17"><path d="M2 6 V14 M5 6 V14 M8 6 V14 M11 6 V14" stroke="#555"/><path d="M1 7 H12" stroke="#2a3ab0" stroke-width="1.4"/><path d="M6 1 H14 L11 4.5 V8 L9 7 V4.5Z" fill="#8ab8f0" stroke="#3a5ab0" stroke-width="0.7"/></svg><svg class="a" style="left:463px;top:1163px" width="15" height="17"><rect x="1.5" y="6" width="10" height="8" fill="#f4f4f4" stroke="#444"/><circle cx="8" cy="10" r="2.2" fill="none" stroke="#2a3ab0"/><path d="M6 1 H14 L11 4.5 V8 L9 7 V4.5Z" fill="#8ab8f0" stroke="#3a5ab0" stroke-width="0.7"/></svg><svg class="a" style="left:479px;top:1163px" width="15" height="17"><path d="M6 5 V15 M2 9 L6 15 L10 9" fill="none" stroke="#444" stroke-width="1.2"/><path d="M6 1 H14 L11 4.5 V8 L9 7 V4.5Z" fill="#8ab8f0" stroke="#3a5ab0" stroke-width="0.7"/></svg><svg class="a" style="left:497px;top:1163px" width="15" height="17"><rect x="1.5" y="6" width="10" height="8" fill="#f4f4f4" stroke="#444"/><text x="3.5" y="13.5" font-size="8" fill="#222" font-family="Liberation Sans">A</text><path d="M6 1 H14 L11 4.5 V8 L9 7 V4.5Z" fill="#8ab8f0" stroke="#3a5ab0" stroke-width="0.7"/></svg><svg class="a" style="left:514px;top:1163px" width="15" height="17"><circle cx="6.5" cy="10" r="4.5" fill="#fff" stroke="#222"/><path d="M6.5 5.5 A4.5 4.5 0 0 1 11 10 H6.5Z M6.5 10 V14.5 A4.5 4.5 0 0 1 2 10Z" fill="#222"/><path d="M6 1 H14 L11 4.5 V8 L9 7 V4.5Z" fill="#8ab8f0" stroke="#3a5ab0" stroke-width="0.7"/></svg><svg class="a" style="left:532px;top:1163px" width="15" height="17"><path d="M0 12 H12" stroke="#222" stroke-width="1.4"/><rect x="4" y="10" width="4" height="4" fill="#30c030" stroke="#206020" stroke-width="0.6"/><path d="M6 1 H14 L11 4.5 V8 L9 7 V4.5Z" fill="#8ab8f0" stroke="#3a5ab0" stroke-width="0.7"/></svg><svg class="a" style="left:549px;top:1163px" width="15" height="17"><path d="M0 12 H12" stroke="#222" stroke-width="1.4"/><rect x="4" y="10" width="4" height="4" fill="#30c030" stroke="#206020" stroke-width="0.6"/><path d="M6 1 H14 L11 4.5 V8 L9 7 V4.5Z" fill="#8ab8f0" stroke="#3a5ab0" stroke-width="0.7"/></svg><div class="a" style="left:570px;top:1164px;width:1px;height:17px;background:#999"></div>
<div class="a" style="left:0;top:1182px;width:1200px;height:1px;background:#8e8e8e"></div>
<div class="a" style="left:2px;top:1185px;font-size:11.3px;color:#333;line-height:14px;white-space:nowrap">Select a callout to modify parameters</div>
<!-- splitter handle -->
<div class="a" style="left:177px;top:589px;width:8px;height:29px;background:#e6e8ec;border:1px solid #555;border-left:none"></div>
<svg class="a" style="left:179px;top:593px" width="5" height="20"><path d="M1 3.5 L3.5 1.5 V5.5Z M1 10 L3.5 8 V12Z M1 16.5 L3.5 14.5 V18.5Z" fill="#222"/></svg>
</body></html>
